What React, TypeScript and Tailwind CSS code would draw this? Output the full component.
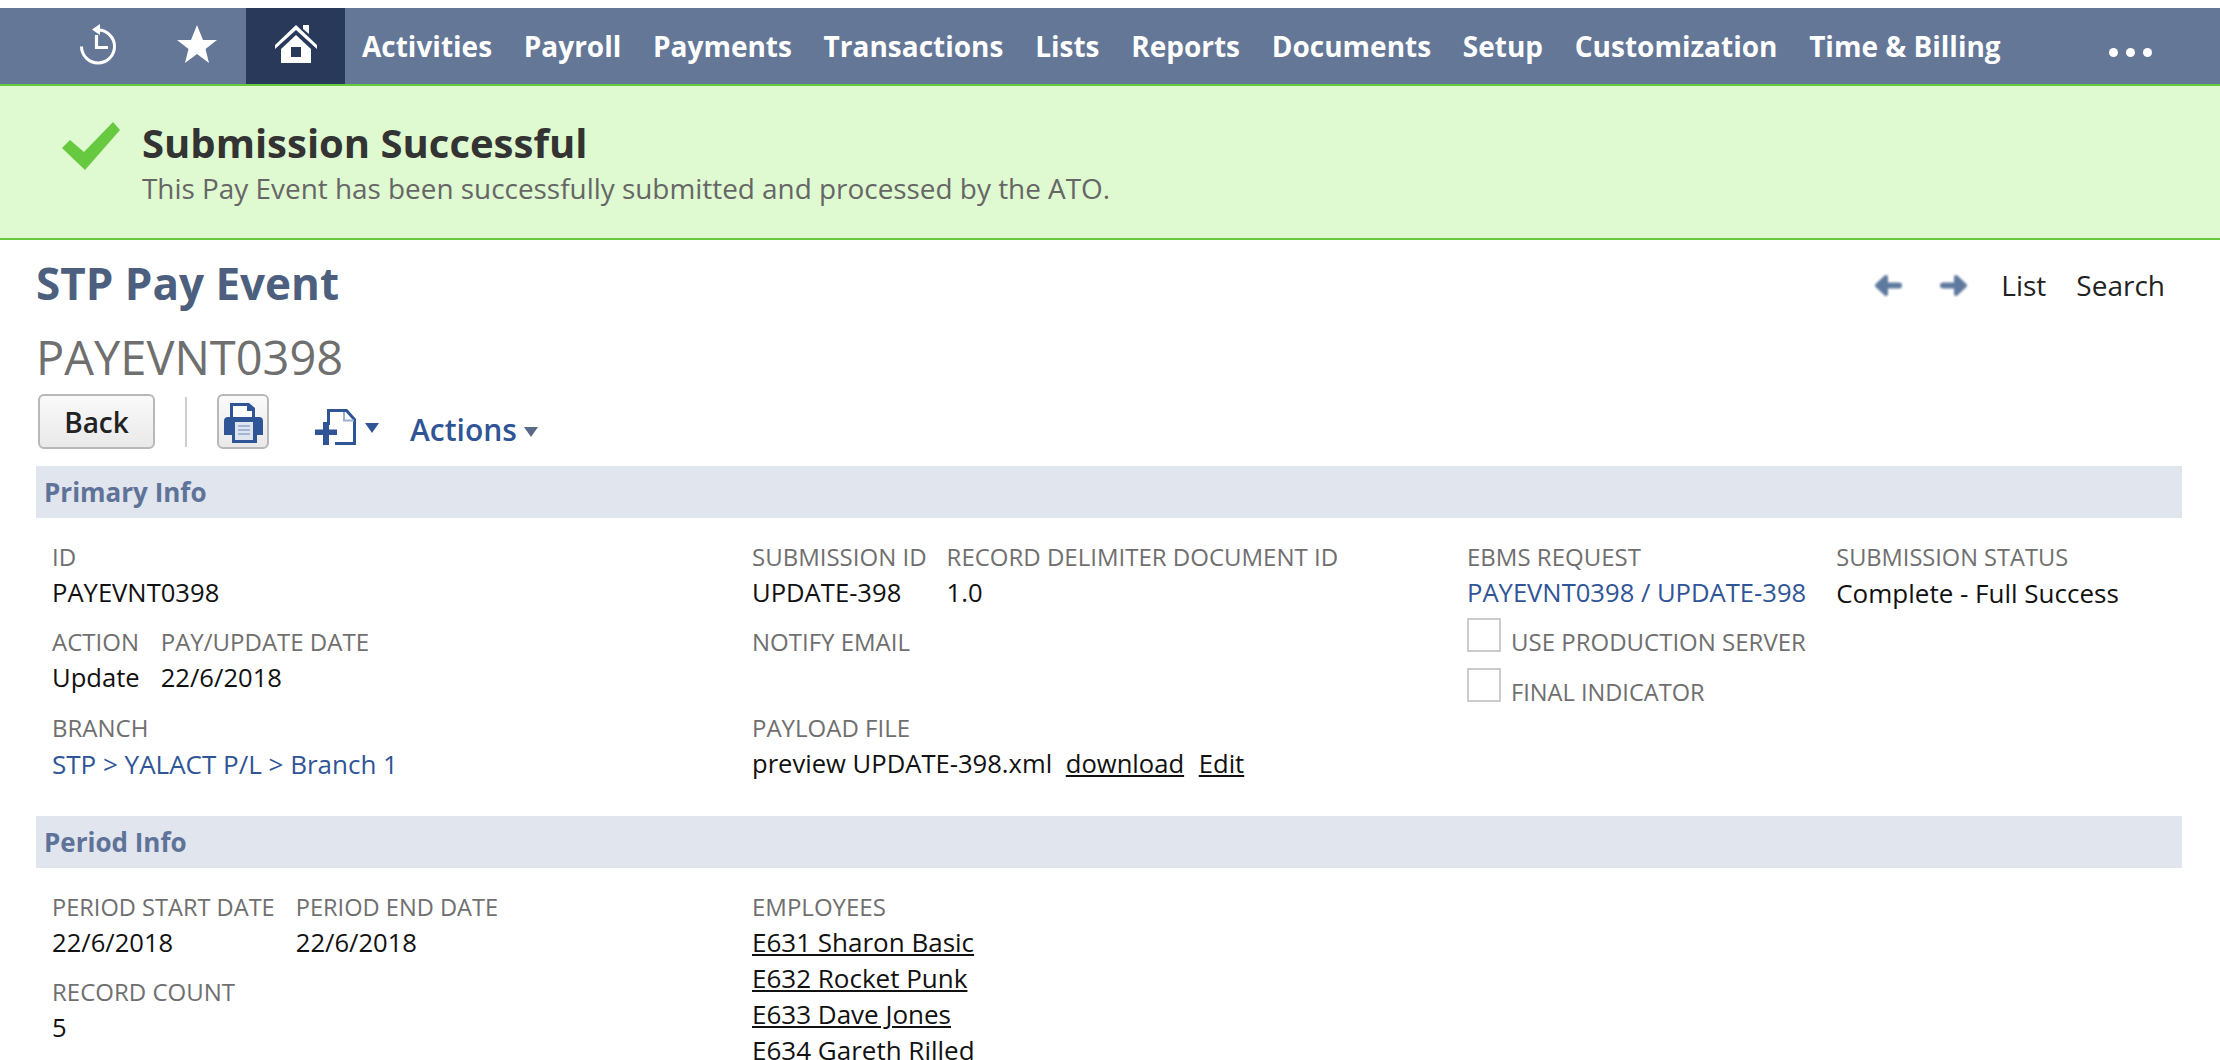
import type { ReactNode } from "react"

const navItems = ["Activities", "Payroll", "Payments", "Transactions", "Lists", "Reports", "Documents", "Setup", "Customization", "Time & Billing"]

function HistoryIcon() {
  return (
    <svg width="40" height="42" viewBox="0 0 40 42" fill="none" className="-mt-[2px]">
      <path d="M20 6 A16.5 16.5 0 1 1 3.5 22.5" stroke="#fff" strokeWidth="3" />
      <path d="M14 5.5 L22 0 V11 Z" fill="#fff" />
      <path d="M18.5 11 V23.5 H30" stroke="#fff" strokeWidth="3.2" />
    </svg>
  )
}

function StarIcon() {
  return (
    <svg width="40" height="38" viewBox="0 0 40 38" className="-mt-[4px]">
      <path d="M20 0 L26 15 H40 L28.5 24 L32 38 L20 29 L8 38 L11.5 24 L0 15 H14 Z" fill="#fff" />
    </svg>
  )
}

function HomeIcon() {
  return (
    <svg width="42" height="38" viewBox="0 0 42 38" className="-mt-[4px]">
      <path d="M28 0 H34 V9 L28 4 Z" fill="#fff" />
      <path d="M0 20 L21 0 L42 20 V24 L21 5 L0 24 Z" fill="#fff" />
      <path fillRule="evenodd" d="M6 24 L21 10 L36 24 V38 H6 Z M16 22 V32 H26 V22 Z" fill="#fff" />
    </svg>
  )
}

function CheckIcon() {
  return (
    <svg width="58" height="48" viewBox="0 0 58 48">
      <path d="M51 0 L58 8 L23 48 L0 26 L8 18 L22 30 Z" fill="#66c93f" />
    </svg>
  )
}

function PrintIcon() {
  return (
    <svg width="39" height="40" viewBox="0 0 39 40">
      <path d="M6 0 H25 L31 5 V14 H35 Q39 14 39 18 V32 H33 V40 H8 V32 H0 V18 Q0 14 4 14 H6 Z" fill="#2f5597" />
      <path d="M9 3 H23 V8 H28 V14 H9 Z" fill="#ffffff" />
      <path d="M11 19 H29 V37 H11 Z" fill="#dfe5ef" />
      <path d="M14 23 H26 M14 27 H26 M14 31 H26" stroke="#8ea6cb" strokeWidth="1.6" />
    </svg>
  )
}

function AddDocIcon() {
  return (
    <svg width="41" height="36" viewBox="0 0 41 36">
      <path d="M13.5 16 V1.5 H31.5 L39.5 10.5 V34.5 H20" fill="none" stroke="#2f5597" strokeWidth="3" />
      <path d="M29 3 V11.5 H39" fill="none" stroke="#9db2d3" strokeWidth="2" />
      <path d="M8 13 H14 V20.5 H22 V26 H14 V36 H8 V26 H0 V20.5 H8 Z" fill="#2f5597" />
    </svg>
  )
}

function Arrow({ flip }: { flip?: boolean }) {
  return (
    <svg width="29" height="23" viewBox="0 0 29 23" className={`blur-[0.8px] ${flip ? "-scale-x-100" : ""}`}>
      <path d="M13 3 L4 11.5 L13 20 Z" fill="#5f7a9e" stroke="#5f7a9e" strokeWidth="4" strokeLinejoin="round" />
      <path d="M12 11.5 H26" stroke="#5f7a9e" strokeWidth="6" strokeLinecap="round" />
    </svg>
  )
}

function Field({ label, children, className = "h-[85px]" }: { label: ReactNode; children?: ReactNode; className?: string }) {
  return (
    <div className={`shrink-0 ${className}`}>
      <div className="h-[36px] text-[24px] leading-[30px] text-[#6f6f6f] whitespace-nowrap">{label}</div>
      <div className="text-[25.6px] leading-[30px] text-[#111] whitespace-nowrap">{children}</div>
    </div>
  )
}

function Band({ title }: { title: string }) {
  return (
    <div className="flex h-[52px] items-center bg-[#e0e5ee] pl-2 text-[26px] font-bold text-[#5f7297]">{title}</div>
  )
}

function CheckRow({ label }: { label: ReactNode }) {
  return (
    <div className="flex h-[50px] gap-[10px]">
      <span className="h-[34px] w-[34px] shrink-0 border-2 border-[#cccccc]" />
      <span className="pt-[9px] text-[24px] leading-[30px] text-[#6f6f6f] whitespace-nowrap">{label}</span>
    </div>
  )
}

export default function App() {
  return (
    <div className="h-[1060px] overflow-hidden bg-white pt-2 font-['Open_Sans',sans-serif]">
      {/* top nav */}
      <div className="flex h-[76px] items-stretch bg-[#647797] pl-[48px] pr-[68px] text-white">
        <div className="flex w-[100px] items-center justify-center"><HistoryIcon /></div>
        <div className="flex w-[98px] items-center justify-center"><StarIcon /></div>
        <div className="flex w-[99px] items-center justify-center bg-[#29395a]"><HomeIcon /></div>
        <div className="ml-[17px] flex items-center gap-[31.7px] text-[28px] font-bold">
          {navItems.map((item) => (
            <span key={item} className="whitespace-nowrap">{item}</span>
          ))}
        </div>
        <div className="ml-auto flex items-center gap-[8px] pt-3">
          <span className="h-[9px] w-[9px] rounded-full bg-white" />
          <span className="h-[9px] w-[9px] rounded-full bg-white" />
          <span className="h-[9px] w-[9px] rounded-full bg-white" />
        </div>
      </div>

      {/* success banner */}
      <div className="flex h-[156px] gap-[22px] border-y-2 border-[#66c93f] bg-[#dff9d0] pl-[62px] pt-[34px]">
        <div className="pt-[2px]"><CheckIcon /></div>
        <div>
          <div className="text-[40px] font-bold leading-[46px] text-[#333333]">Submission Successful</div>
          <div className="text-[27.9px] leading-[44px] text-[#666666]">This Pay Event has been successfully submitted and processed by the ATO.</div>
        </div>
      </div>

      <div className="pl-[36px] pr-[38px]">
        {/* title row */}
        <div className="flex items-center justify-between pr-[17px] pt-[16px]">
          <div className="text-[44px] font-bold leading-[54px] text-[#4d5f7e]">STP Pay Event</div>
          <div className="flex items-center pt-[4px] text-[28px] text-[#222222]">
            <Arrow />
            <span className="ml-[38px] flex"><Arrow flip /></span>
            <span className="ml-[32px]">List</span>
            <span className="ml-[30px]">Search</span>
          </div>
        </div>
        <div className="pt-[18px] text-[47px] leading-[58px] text-[#6f6f6f]">PAYEVNT0398</div>

        {/* toolbar */}
        <div className="mt-[8px] flex h-[56px] items-start pl-[2px]">
          <button className="h-[55px] w-[117px] rounded-[6px] border-2 border-[#b8b8b8] bg-gradient-to-b from-[#fafafa] to-[#e9e9e9] text-[28px] font-semibold text-[#222222]">Back</button>
          <span className="ml-[30px] mt-[3px] h-[50px] w-[2px] bg-[#cfcfcf]" />
          <button className="ml-[30px] flex h-[55px] w-[52px] items-start justify-center rounded-[6px] border-2 border-[#b8b8b8] bg-gradient-to-b from-[#fafafa] to-[#e9e9e9] pt-[7px]"><PrintIcon /></button>
          <span className="ml-[46px] mt-[15px]"><AddDocIcon /></span>
          <span className="ml-[9px] mt-[29px] h-0 w-0 border-x-[7px] border-t-[10px] border-x-transparent border-t-[#2f5597]" />
          <span className="ml-[31px] mt-[17px] text-[30px] font-semibold leading-[38px] text-[#2f5597]">Actions</span>
          <span className="ml-[7px] mt-[33px] h-0 w-0 border-x-[7px] border-t-[10px] border-x-transparent border-t-[#5a6a86]" />
        </div>

        <div className="mt-[16px]"><Band title="Primary Info" /></div>
        <div className="flex pl-[16px] pt-[24px]">
          <div className="w-[700px] shrink-0">
            <Field label="ID">PAYEVNT0398</Field>
            <div className="flex gap-[21px]">
              <Field label="ACTION">Update</Field>
              <Field label="PAY/UPDATE DATE">22/6/2018</Field>
            </div>
            <Field label="BRANCH" className="h-[85px] pt-[1px]"><span className="text-[26px] text-[#2f5597]">STP &gt; YALACT P/L &gt; Branch 1</span></Field>
          </div>
          <div className="w-[715px] shrink-0">
            <div className="flex gap-[20px]">
              <Field label="SUBMISSION ID">UPDATE-398</Field>
              <Field label="RECORD DELIMITER DOCUMENT ID">1.0</Field>
            </div>
            <Field label="NOTIFY EMAIL" />
            <Field label="PAYLOAD FILE" className="h-[85px] pt-[1px]">
              preview UPDATE-398.xml <span className="ml-[7px] underline">download</span> <span className="ml-[8px] underline">Edit</span>
            </Field>
          </div>
          <div>
            <div className="flex gap-[30px]">
              <Field label="EBMS REQUEST" className="h-[76px]"><span className="text-[#2f5597]">PAYEVNT0398 / UPDATE-398</span></Field>
              <Field label={<span className="text-[23.6px]">SUBMISSION STATUS</span>} className="h-[76px]"><span className="text-[26px]">Complete - Full Success</span></Field>
            </div>
            <CheckRow label="USE PRODUCTION SERVER" />
            <CheckRow label={<span className="text-[23.6px]">FINAL INDICATOR</span>} />
          </div>
        </div>

        <div className="mt-[19px]"><Band title="Period Info" /></div>
        <div className="flex pl-[16px] pt-[24px]">
          <div className="w-[700px] shrink-0">
            <div className="flex gap-[21px]">
              <Field label={<span className="text-[23.6px]">PERIOD START DATE</span>}>22/6/2018</Field>
              <Field label={<span className="text-[23.6px]">PERIOD END DATE</span>}>22/6/2018</Field>
            </div>
            <Field label="RECORD COUNT">5</Field>
          </div>
          <div className="w-[715px] shrink-0">
            <div className="h-[32px] text-[24px] leading-[30px] text-[#6f6f6f]">EMPLOYEES</div>
            {["E631 Sharon Basic", "E632 Rocket Punk", "E633 Dave Jones", "E634 Gareth Rilled"].map((name) => (
              <div key={name} className="text-[26px] leading-[36px] text-[#111] underline">{name}</div>
            ))}
          </div>
        </div>
      </div>
    </div>
  )
}
